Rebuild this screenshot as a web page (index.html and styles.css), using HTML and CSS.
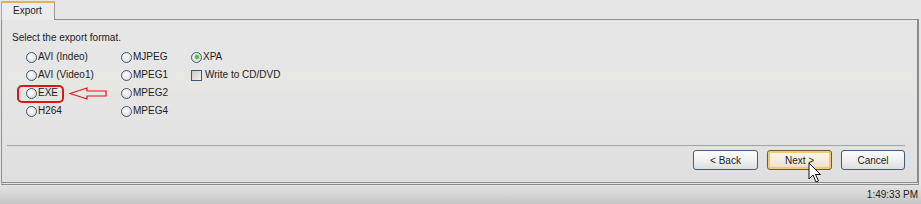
FILE: index.html
```html
<!DOCTYPE html>
<html>
<head>
<meta charset="utf-8">
<link rel="stylesheet" href="styles.css">
</head>
<body>
<div class="window">
  <div class="tabstrip">
    <div class="tab">Export</div>
    <div class="tabfill"></div>
  </div>
  <div class="panel">
    <div class="title">Select the export format.</div>
    <div class="options">
      <div class="col c1">
        <div class="opt"><span class="radio"></span><span class="lbl">AVI (Indeo)</span></div>
        <div class="opt"><span class="radio"></span><span class="lbl">AVI (Video1)</span></div>
        <div class="opt"><span class="radio"></span><span class="lbl">EXE</span></div>
        <div class="opt"><span class="radio"></span><span class="lbl">H264</span></div>
      </div>
      <div class="col c2">
        <div class="opt"><span class="radio"></span><span class="lbl">MJPEG</span></div>
        <div class="opt"><span class="radio"></span><span class="lbl">MPEG1</span></div>
        <div class="opt"><span class="radio"></span><span class="lbl">MPEG2</span></div>
        <div class="opt"><span class="radio"></span><span class="lbl">MPEG4</span></div>
      </div>
      <div class="col c3">
        <div class="opt"><span class="radio checked"></span><span class="lbl">XPA</span></div>
        <div class="opt"><span class="check"></span><span class="lbl lbl-check">Write to CD/DVD</span></div>
      </div>
    </div>
    <div class="footer">
      <button class="btn">&lt; Back</button>
      <button class="btn focus">Next &gt;</button>
      <button class="btn">Cancel</button>
    </div>
  </div>
  <div class="status"><span class="time">1:49:33 PM</span></div>

  <div class="highlight"></div>
  <svg class="arrow" width="40" height="14" viewBox="0 0 40 14">
    <polygon points="1,6.5 18,1 18,4 37,4 37,9 18,9 18,12" fill="none" stroke="#e01a1a" stroke-width="1.2"/>
  </svg>
  <svg class="cursor" width="14" height="22" viewBox="0 0 14 22">
    <polygon points="1,1 1,17 5,13 8,20 10.5,19 7.5,12.5 12.5,12.5" fill="#fff" stroke="#111" stroke-width="1"/>
  </svg>
</div>
</body>
</html>
```

FILE: styles.css
```css
* { box-sizing: border-box; }
html, body { margin: 0; padding: 0; }
body {
  background: #e6e6e6;
  font-family: "Liberation Sans", Arial, sans-serif;
  font-size: 10px;
  color: #1c1c1c;
}
.window {
  position: relative;
  width: 921px;
  height: 204px;
  overflow: hidden;
  background: #e6e6e6;
}
.tabstrip {
  display: flex;
  height: 20px;
  align-items: stretch;
}
.tab {
  margin-top: 1px;
  margin-left: 1px;
  width: 54px;
  border-top: 2px solid #e6b24e;
  border-left: 1px solid #a8a8a8;
  border-right: 1px solid #9a9a9a;
  background: #ececec;
  padding-left: 11px;
  line-height: 15px;
  font-size: 10px;
  color: #222;
}
.tabfill {
  flex: 1;
  margin-right: 2px;
  border-bottom: 1px solid #8e8e8e;
}
.panel {
  margin-left: 1px;
  width: 918px;
  height: 165px;
  border-left: 1px solid #8e8e8e;
  border-right: 2px solid #8a8a86;
  border-bottom: 3px double #8c8c8a;
  background: linear-gradient(#e6e6e6 0%, #e6e6e6 30%, #e7e7e2 40%, #e7e4e4 48%, #e4e4e4 60%, #dfdfdf 100%);
  display: flex;
  flex-direction: column;
  padding: 12px 0 0 10px;
}
.title {
  line-height: 12px;
  height: 12px;
}
.options {
  display: flex;
  margin-top: 4px;
  padding-left: 14px;
}
.col { display: flex; flex-direction: column; }
.c1 { width: 95px; }
.c2 { width: 70px; }
.opt {
  display: flex;
  align-items: center;
  height: 18px;
}
.radio {
  width: 11px;
  height: 11px;
  border-radius: 50%;
  border: 1px solid #3e5876;
  background: radial-gradient(circle at 45% 40%, #ffffff 0%, #eeeeee 40%, #cfcfcf 100%);
  position: relative;
  flex: none;
}
.radio.checked::after {
  content: "";
  position: absolute;
  left: 2.5px;
  top: 2.5px;
  width: 4px;
  height: 4px;
  border-radius: 50%;
  background: #52b84a;
  box-shadow: 0 0 1px 1px #b8e0b0;
}
.check {
  width: 11px;
  height: 11px;
  border: 1px solid #3e5876;
  background: linear-gradient(135deg, #c8c8c8, #f2f2f2);
  flex: none;
}
.lbl { margin-left: 1px; line-height: 12px; }
.lbl-check { margin-left: 3px; }
.footer {
  margin-top: auto;
  margin-left: -5px;
  margin-right: 12px;
  border-top: 1px solid #a2a2a2;
  padding: 4px 0 12px;
  display: flex;
  justify-content: flex-end;
  gap: 9px;
}
.btn {
  width: 65px;
  height: 20px;
  padding: 0;
  border: 1px solid #3f5e80;
  border-radius: 3px;
  background: linear-gradient(#fcfcfc, #eeeeee 60%, #dedede);
  font-family: "Liberation Sans", Arial, sans-serif;
  font-size: 10px;
  color: #222;
}
.btn:last-child { width: 64px; }
.btn.focus {
  border-color: #6a5a3a;
  box-shadow: inset 0 0 0 2px #f2c870;
  background: linear-gradient(#fdf8ec, #f4ead8 60%, #e8dcc6);
}
.status {
  height: 19px;
  background: linear-gradient(#e2e2e2 0%, #dcdcdc 25%, #d4d4d4 50%, #cdcdcd 75%, #c6c6c6 100%);
  display: flex;
  justify-content: flex-end;
  align-items: center;
  padding-right: 3px;
}
.time { font-size: 10px; color: #222; }
.highlight {
  position: absolute;
  left: 17px;
  top: 85px;
  width: 47px;
  height: 18px;
  border: 2.5px solid #e0141c;
  border-radius: 5px;
}
.arrow {
  position: absolute;
  left: 69px;
  top: 87px;
}
.cursor {
  position: absolute;
  left: 808px;
  top: 162px;
}
```
